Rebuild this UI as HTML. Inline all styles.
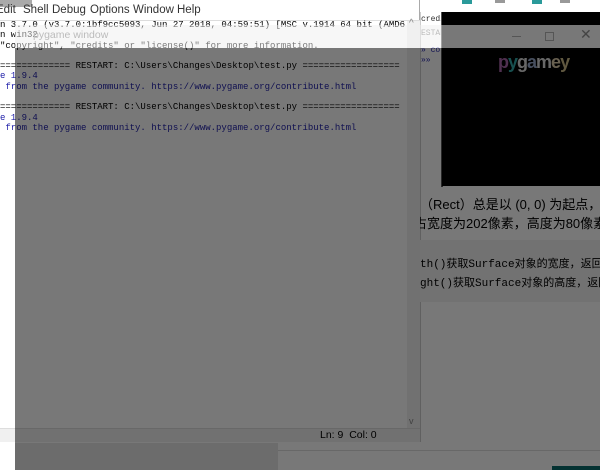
<!DOCTYPE html>
<html><head><meta charset="utf-8"><style>
*{margin:0;padding:0;box-sizing:border-box}
body{width:600px;height:470px;overflow:hidden;background:#fff;position:relative;font-family:"Liberation Sans","Noto Sans CJK SC",sans-serif}
.a{position:absolute}
.mono{font-family:"Liberation Mono","Noto Sans CJK SC",monospace;font-size:9px;white-space:pre;line-height:10.3px}
.menu{font-size:11.5px;color:#333;white-space:pre;top:4px}
</style></head><body>
<div class="a" style="left:420px;top:0;width:180px;height:470px;background:#fff;overflow:hidden">
<div class="a" style="left:42px;top:0;width:10px;height:4px;background:#2a9a9a"></div>
<div class="a" style="left:112px;top:0;width:10px;height:4px;background:#2a9a9a"></div>
<div class="a" style="left:75px;top:0;width:10px;height:3px;background:#999"></div>
<div class="a" style="left:140px;top:0;width:10px;height:3px;background:#999"></div>
<div class="a" style="left:0;top:12px;width:22px;height:430px;background:#fff;border-left:1px solid #ccc"></div>
<div class="a mono" style="left:1px;top:15px;color:#333;font-size:8px">credi</div>
<div class="a mono" style="left:1px;top:29px;color:#888;font-size:8px">ESTAR</div>
<div class="a mono" style="left:1px;top:46px;color:#22a;font-size:8px">» co
»»</div>
<div class="a" style="left:21px;top:12px;width:2px;height:175px;background:#555"></div>
<div class="a" style="left:22px;top:12px;width:158px;height:174px;background:#000"></div>
<div class="a" style="left:78px;top:52px;font:bold 18px 'Liberation Sans',sans-serif;letter-spacing:-1px"><span style="color:#a6a">p</span><span style="color:#3aa">y</span><span style="color:#ddd">g</span><span style="color:#9ac">a</span><span style="color:#ddd">m</span><span style="color:#dca">e</span><span style="color:#cb8">y</span></div>
<div class="a" style="left:0;top:194px;font-size:13px;color:#000;white-space:nowrap">（Rect）总是以 (0, 0) 为起点，v</div>
<div class="a" style="left:-6px;top:213px;font-size:13px;color:#000;white-space:nowrap">占宽度为202像素，高度为80像素</div>
<div class="a" style="left:0;top:240px;width:180px;height:62px;background:#f3f3f3"></div>
<div class="a" style="left:0;top:255px;font:11px 'Liberation Mono','Noto Sans CJK SC',monospace;color:#000;white-space:nowrap">th()获取Surface对象的宽度，返回S</div>
<div class="a" style="left:0;top:274px;font:11px 'Liberation Mono','Noto Sans CJK SC',monospace;color:#000;white-space:nowrap">ght()获取Surface对象的高度，返回</div>
</div>
<div class="a" style="left:278px;top:450px;width:322px;height:1px;background:#ddd"></div>
<div class="a" style="left:15px;top:443px;width:263px;height:27px;background:#e6e6e6"></div>
<div class="a" style="left:552px;top:466px;width:48px;height:4px;background:#0a6a6a"></div>

<div class="a" style="left:0;top:0;width:420px;height:442px;background:#fff;border-right:1px solid #aaa;border-bottom:1px solid #aaa"></div>
<div class="a" style="left:0;top:0;width:32px;height:7px;background:#aaa"></div>
<div class="a menu" style="left:-4px">Edit</div>
<div class="a menu" style="left:23px">Shell</div>
<div class="a menu" style="left:52px">Debug</div>
<div class="a menu" style="left:90px">Options</div>
<div class="a menu" style="left:133px">Window</div>
<div class="a menu" style="left:177px">Help</div>
<div class="a" style="left:0;top:20px;width:420px;height:1px;background:#ddd"></div>
<div class="a mono" style="left:0;top:20px;color:#000">n 3.7.0 (v3.7.0:1bf9cc5093, Jun 27 2018, 04:59:51) [MSC v.1914 64 bit (AMD6
n win32
"copyright", "credits" or "license()" for more information.

============= RESTART: C:\Users\Changes\Desktop\test.py ==================
<span style="color:#22a">e 1.9.4
 from the pygame community. https://www.pygame.org/contribute.html</span>

============= RESTART: C:\Users\Changes\Desktop\test.py ==================
<span style="color:#22a">e 1.9.4
 from the pygame community. https://www.pygame.org/contribute.html</span></div>
<div class="a" style="left:407px;top:21px;width:13px;height:407px;background:#f0f0f0"></div>
<div class="a" style="left:409px;top:18px;font-size:10px;color:#888">^</div>
<div class="a" style="left:409px;top:416px;font-size:9px;color:#888">v</div>
<div class="a" style="left:0;top:428px;width:420px;height:14px;background:#f0f0f0;border-top:1px solid #ddd"></div>
<div class="a" style="left:320px;top:429px;font-size:10.5px;color:#000;white-space:pre">Ln: 9  Col: 0</div>

<div class="a" style="left:15px;top:25px;width:585px;height:23px;background:rgba(240,240,240,0.5)"></div>
<div class="a" style="left:33px;top:29px;font-size:10.5px;color:#bbb">pygame window</div>
<div class="a" style="left:512px;top:36px;width:9px;height:1px;background:#555"></div>
<div class="a" style="left:545px;top:32px;width:9px;height:9px;border:1px solid #555"></div>
<div class="a" style="left:580px;top:26px;font-size:14px;color:#444">✕</div>

<div class="a" style="left:15px;top:48px;width:585px;height:422px;background:rgba(0,0,0,0.53)"></div>
</body></html>
